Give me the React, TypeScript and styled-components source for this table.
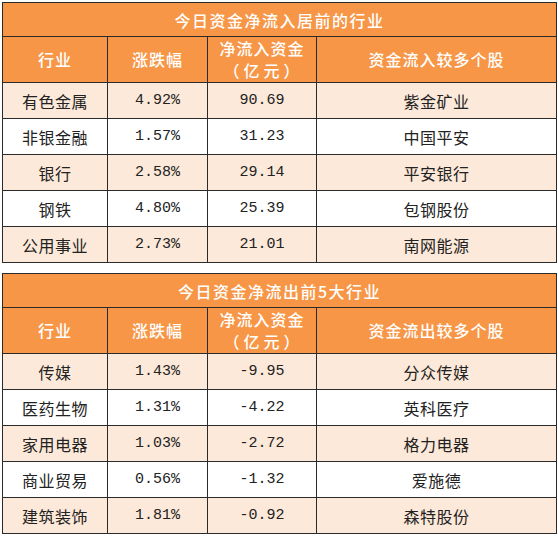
import React from "react";
import styled, { createGlobalStyle } from "styled-components";

const Global = createGlobalStyle`
  html, body { margin: 0; padding: 0; background: #ffffff; }
`;

const Page = styled.div`
  display: flex;
  flex-direction: column;
  gap: 10px;
  padding: 2px 0 0 2px;
  width: 554px;
`;

const Table = styled.table`
  border-collapse: collapse;
  table-layout: fixed;
  width: 554px;
  font-family: "Noto Sans CJK SC", "Noto Sans", sans-serif;
`;

const TitleCell = styled.th`
  background: #f79646;
  color: #ffffff;
  height: 33px;
  padding: 0;
  font-size: 16px;
  font-weight: 500;
  letter-spacing: 1.5px;
  text-align: center;
  border: 1px solid #2a2a2a;
`;

const HeadCell = styled.th`
  background: #f79646;
  color: #ffffff;
  height: 44px;
  padding: 0 0 1px 0;
  font-size: 16px;
  font-weight: 500;
  letter-spacing: 1px;
  line-height: 22px;
  text-align: center;
  border: 1px solid #2a2a2a;
`;

const HeadLine = styled.span<{ $wide?: boolean }>`
  display: block;
  letter-spacing: ${(p) => (p.$wide ? "4px" : "1px")};
  margin-right: ${(p) => (p.$wide ? "-3px" : "0")};
`;

const Row = styled.tr<{ $shade: boolean }>`
  background: ${(p) => (p.$shade ? "#fde9d9" : "#ffffff")};
`;

const Cell = styled.td<{ $num?: boolean }>`
  height: 35px;
  padding: 0;
  text-align: center;
  color: #222222;
  border: 1px solid #2a2a2a;
  font-size: ${(p) => (p.$num ? "15px" : "16px")};
  letter-spacing: ${(p) => (p.$num ? "0" : "0.5px")};
  font-family: ${(p) =>
    p.$num
      ? `"Liberation Mono", "DejaVu Sans Mono", monospace`
      : `"Noto Sans CJK SC", "Noto Sans", sans-serif`};
`;

type RowData = [string, string, string, string];

interface Data {
  title: string;
  stockHead: string;
  rows: RowData[];
}

const tables: Data[] = [
  {
    title: "今日资金净流入居前的行业",
    stockHead: "资金流入较多个股",
    rows: [
      ["有色金属", "4.92%", "90.69", "紫金矿业"],
      ["非银金融", "1.57%", "31.23", "中国平安"],
      ["银行", "2.58%", "29.14", "平安银行"],
      ["钢铁", "4.80%", "25.39", "包钢股份"],
      ["公用事业", "2.73%", "21.01", "南网能源"],
    ],
  },
  {
    title: "今日资金净流出前5大行业",
    stockHead: "资金流出较多个股",
    rows: [
      ["传媒", "1.43%", "-9.95", "分众传媒"],
      ["医药生物", "1.31%", "-4.22", "英科医疗"],
      ["家用电器", "1.03%", "-2.72", "格力电器"],
      ["商业贸易", "0.56%", "-1.32", "爱施德"],
      ["建筑装饰", "1.81%", "-0.92", "森特股份"],
    ],
  },
];

function FlowTable({ data }: { data: Data }) {
  return (
    <Table>
      <colgroup>
        <col style={{ width: 105 }} />
        <col style={{ width: 100 }} />
        <col style={{ width: 109 }} />
        <col style={{ width: 240 }} />
      </colgroup>
      <thead>
        <tr>
          <TitleCell colSpan={4}>{data.title}</TitleCell>
        </tr>
        <tr>
          <HeadCell>行业</HeadCell>
          <HeadCell>涨跌幅</HeadCell>
          <HeadCell>
            <HeadLine>净流入资金</HeadLine>
            <HeadLine $wide>（亿元）</HeadLine>
          </HeadCell>
          <HeadCell>{data.stockHead}</HeadCell>
        </tr>
      </thead>
      <tbody>
        {data.rows.map((r, i) => (
          <Row key={r[0]} $shade={i % 2 === 0}>
            <Cell>{r[0]}</Cell>
            <Cell $num>{r[1]}</Cell>
            <Cell $num>{r[2]}</Cell>
            <Cell>{r[3]}</Cell>
          </Row>
        ))}
      </tbody>
    </Table>
  );
}

export default function App() {
  return (
    <>
      <Global />
      <Page>
        {tables.map((t) => (
          <FlowTable key={t.title} data={t} />
        ))}
      </Page>
    </>
  );
}
